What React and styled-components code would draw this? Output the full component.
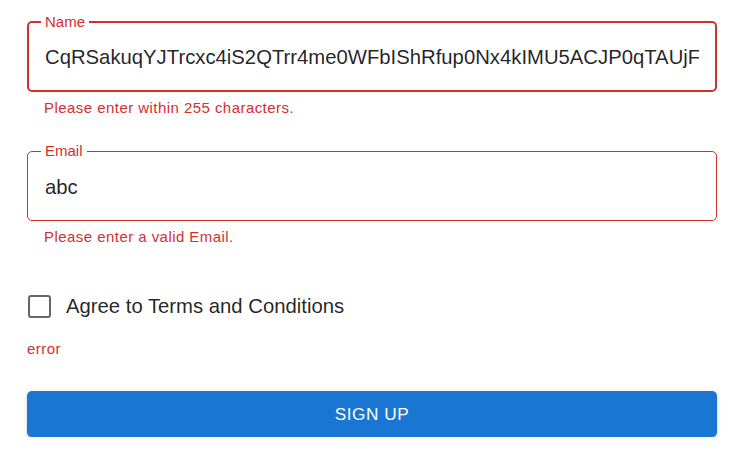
import React from 'react';
import styled, { createGlobalStyle } from 'styled-components';

const GlobalStyle = createGlobalStyle`
  body {
    margin: 0;
    background: #fff;
    font-family: "Liberation Sans", Arial, sans-serif;
  }
`;

const Page = styled.div`
  padding: 14px 27px 0;
`;

const Form = styled.form`
  display: flex;
  flex-direction: column;
`;

const FieldGroup = styled.div`
  display: flex;
  flex-direction: column;
  margin-bottom: ${(p) => p.gap || 0}px;
`;

const FieldBox = styled.fieldset`
  margin: 0;
  padding: 0 ${(p) => (p.focused ? 12 : 13)}px 0;
  border: ${(p) => (p.focused ? 2 : 1)}px solid #d32f2f;
  border-radius: 5px;
  min-width: 0;
`;

const Legend = styled.legend`
  padding: 0 4px;
  font-size: 15px;
  line-height: 16px;
  color: #d32f2f;
`;

const Input = styled.input`
  display: block;
  width: 100%;
  box-sizing: border-box;
  border: none;
  outline: none;
  background: transparent;
  padding: 0 4px 5px;
  height: ${(p) => (p.focused ? 60 : 61)}px;
  font-family: "Liberation Sans", Arial, sans-serif;
  font-size: 20.3px;
  color: rgba(0, 0, 0, 0.87);
`;

const Helper = styled.p`
  margin: 4px 0 0 17px;
  font-size: 15px;
  line-height: 24px;
  letter-spacing: 0.03em;
  color: #d32f2f;
`;

const CheckRow = styled.label`
  display: flex;
  align-items: center;
  margin-top: 32px;
  height: 50px;
  cursor: pointer;
`;

const Box = styled.span`
  width: 23px;
  height: 23px;
  box-sizing: border-box;
  border: 2.5px solid #666;
  border-radius: 3px;
  margin-left: 1px;
  margin-right: 15px;
`;

const CheckText = styled.span`
  font-size: 20.3px;
  color: rgba(0, 0, 0, 0.87);
`;

const ErrorText = styled.p`
  margin: 6px 0 0;
  font-size: 15px;
  line-height: 24px;
  letter-spacing: 0.03em;
  color: #d32f2f;
`;

const Button = styled.button`
  margin-top: 30px;
  height: 46px;
  border: none;
  border-radius: 5px;
  background: #1976d2;
  color: #fff;
  font-family: "Liberation Sans", Arial, sans-serif;
  font-size: 17.2px;
  letter-spacing: 0.03em;
  text-transform: uppercase;
  box-shadow: 0 3px 1px -2px rgba(0, 0, 0, 0.2), 0 2px 2px 0 rgba(0, 0, 0, 0.14),
    0 1px 5px 0 rgba(0, 0, 0, 0.12);
`;

const fields = [
  {
    label: 'Name',
    value: 'CqRSakuqYJTrcxc4iS2QTrr4me0WFbIShRfup0Nx4kIMU5ACJP0qTAUjF',
    helper: 'Please enter within 255 characters.',
    focused: true,
    gap: 23,
  },
  {
    label: 'Email',
    value: 'abc',
    helper: 'Please enter a valid Email.',
    focused: false,
    gap: 0,
  },
];

export default function App() {
  return (
    <Page>
      <GlobalStyle />
      <Form onSubmit={(e) => e.preventDefault()}>
        {fields.map((f) => (
          <FieldGroup key={f.label} gap={f.gap}>
            <FieldBox focused={f.focused}>
              <Legend>{f.label}</Legend>
              <Input focused={f.focused} defaultValue={f.value} />
            </FieldBox>
            <Helper>{f.helper}</Helper>
          </FieldGroup>
        ))}
        <CheckRow>
          <Box />
          <CheckText>Agree to Terms and Conditions</CheckText>
        </CheckRow>
        <ErrorText>error</ErrorText>
        <Button type="submit">Sign up</Button>
      </Form>
    </Page>
  );
}
